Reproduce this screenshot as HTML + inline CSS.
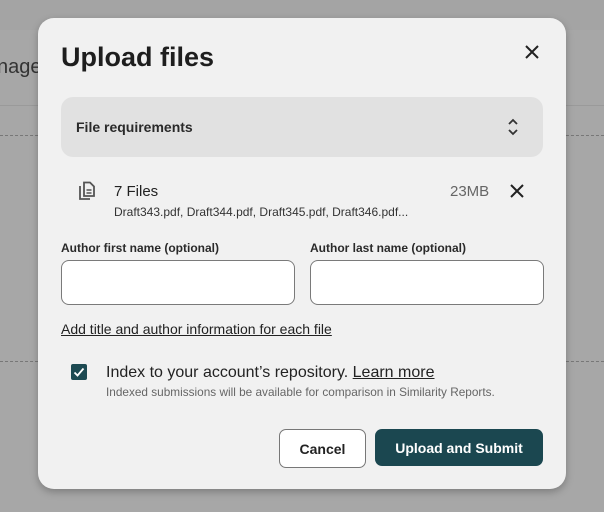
<!DOCTYPE html>
<html><head><style>
body{margin:0;width:604px;height:512px;background:#a4a4a4;position:relative;overflow:hidden;font-family:"Liberation Sans",sans-serif;color:#222}
.bgpanel{position:absolute;left:0;top:30px;width:604px;height:482px;background:#a7a7a7}
.hline{position:absolute;left:0;width:604px;top:105px;border-top:1px solid #9a9a9a}
.dash{position:absolute;left:0;width:604px;border-top:1px dashed #777}
.nage{position:absolute;left:-3px;top:56px;font-size:20px;color:#333}
.modal{position:absolute;left:38px;top:18px;width:528px;height:471px;background:#f1f1f1;border-radius:16px;box-shadow:0 3px 8px rgba(0,0,0,.25)}
.a{position:absolute;white-space:nowrap}
h1{position:absolute;left:23px;top:24px;margin:0;font-size:27px;font-weight:bold;color:#1e1e1e}
.req{position:absolute;left:23px;top:79px;width:482px;height:60px;background:#e1e1e1;border-radius:12px}
.lbl{font-size:12px;font-weight:bold;color:#2a2a2a}
.inp{position:absolute;top:242px;width:232px;height:43px;background:#fff;border:1px solid #7a7a7a;border-radius:8px}
.btn{position:absolute;top:411px;height:37px;border-radius:7px;font-size:14px;font-weight:bold;display:flex;align-items:center;justify-content:center}
</style></head><body>
<div class="bgpanel"></div>
<div class="hline"></div>
<div class="dash" style="top:135px"></div>
<div class="dash" style="top:361px"></div>
<div class="nage">nage</div>
<div class="modal">
<h1>Upload files</h1>
<svg class="a" style="left:486px;top:26px" width="16" height="16" viewBox="0 0 16 16"><path d="M2 2L14 14M14 2L2 14" stroke="#222" stroke-width="2"/></svg>
<div class="req"><div class="a" style="left:15px;top:22px;font-size:14px;font-weight:bold;color:#2a2a2a">File requirements</div>
<svg class="a" style="left:446px;top:21px" width="12" height="18" viewBox="0 0 12 18"><path d="M2 6L6 2L10 6M2 12L6 16L10 12" stroke="#333" stroke-width="1.8" fill="none"/></svg></div>
<svg class="a" style="left:40px;top:163px" width="18" height="20" viewBox="0 0 18 20"><path d="M2 5V18H12" stroke="#555" stroke-width="1.8" fill="none"/><path d="M6 1.5H12L16 5.5V15H6Z" stroke="#555" stroke-width="1.8" fill="none"/><path d="M8.5 9H13.5M8.5 12H13.5" stroke="#555" stroke-width="1.5"/></svg>
<div class="a" style="left:76px;top:165px;font-size:15px;color:#222">7 Files</div>
<div class="a" style="left:76px;top:187px;font-size:12px;color:#333">Draft343.pdf, Draft344.pdf, Draft345.pdf, Draft346.pdf...</div>
<div class="a" style="left:412px;top:165px;font-size:15px;color:#666">23MB</div>
<svg class="a" style="left:472px;top:166px" width="14" height="14" viewBox="0 0 14 14"><path d="M1 1L13 13M13 1L1 13" stroke="#222" stroke-width="2"/></svg>
<div class="a lbl" style="left:23px;top:223px">Author first name (optional)</div>
<div class="a lbl" style="left:272px;top:223px">Author last name (optional)</div>
<div class="inp" style="left:23px"></div>
<div class="inp" style="left:272px"></div>
<div class="a" style="left:23px;top:303px;font-size:14px;text-decoration:underline;color:#222">Add title and author information for each file</div>
<div class="a" style="left:33px;top:346px;width:16px;height:16px;background:#1d4a52;border-radius:2px"><svg width="16" height="16" viewBox="0 0 16 16"><path d="M3.5 8.5L6.5 11.5L12.5 4.5" stroke="#fff" stroke-width="1.8" fill="none"/></svg></div>
<div class="a" style="left:68px;top:346px;font-size:16px;color:#222">Index to your account’s repository. <span style="text-decoration:underline">Learn more</span></div>
<div class="a" style="left:68px;top:367px;font-size:11.8px;color:#666">Indexed submissions will be available for comparison in Similarity Reports.</div>
<div class="btn" style="left:241px;width:85px;background:#fff;border:1px solid #777;color:#222">Cancel</div>
<div class="btn" style="left:337px;width:168px;background:#1b4750;color:#fff">Upload and Submit</div>
</div>
</body></html>
